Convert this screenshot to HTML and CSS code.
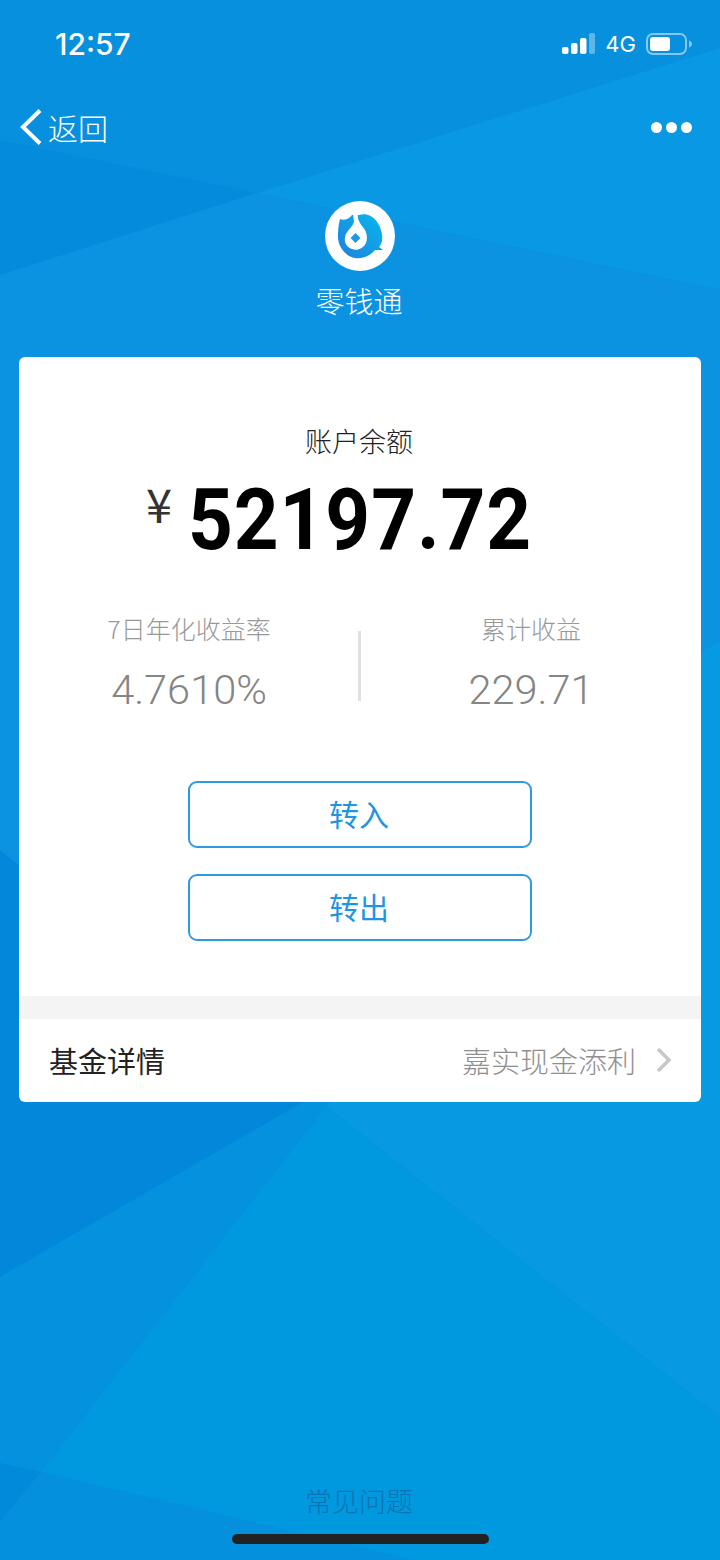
FILE: index.html
```html
<!DOCTYPE html>
<html lang="zh-CN">
<head>
  <meta charset="UTF-8">
  <meta name="viewport" content="width=device-width, initial-scale=1.0">
  <title>零钱通</title>
  <link rel="stylesheet" href="styles.css">
</head>
<body>
  <div class="phone">
    <!-- background facets -->
    <svg class="facets" width="720" height="1560" viewBox="0 0 720 1560">
      <polygon points="0,140 257,193 0,275" fill="#058bdc"/>
      <polygon points="257,193 720,48 720,290" fill="#0998e3"/>
      <polygon points="0,275 257,193 720,290 720,640 320,900 321,1102 0,850" fill="#0b92e0"/>
      <polygon points="720,640 320,900 321,1102 720,1417" fill="#079ae3"/>
      <polygon points="0,850 303,1102 0,1277" fill="#0287da"/>
      <polygon points="321,1102 720,1417 720,1560 413,1560 41,1472" fill="#0098df"/>
      <polygon points="303,1102 330,1102 41,1472 0,1463 0,1277" fill="#0492de"/>
      <polygon points="0,1463 41,1472 0,1522" fill="#028ada"/>
      <polygon points="41,1472 413,1560 0,1560 0,1522" fill="#0590de"/>
    </svg>

    <div class="status-bar">
      <span class="time">12:57</span>
      <div class="status-icons">
        <svg width="33" height="22" viewBox="0 0 33 22">
          <rect x="0" y="14" width="6.500" height="7" rx="2" fill="#fff"/>
          <rect x="9" y="10" width="6.500" height="11" rx="2" fill="#fff"/>
          <rect x="18" y="5" width="6.500" height="16" rx="2" fill="#fff"/>
          <rect x="27" y="0" width="6" height="21" rx="2" fill="#fff" opacity="0.35"/>
        </svg>
        <span class="net">4G</span>
        <svg width="46" height="22" viewBox="0 0 46 22">
          <rect x="1" y="1" width="39" height="20" rx="6" fill="none" stroke="#fff" stroke-opacity="0.5" stroke-width="2"/>
          <rect x="4" y="4" width="20" height="14" rx="3" fill="#fff"/>
          <path d="M43 7.500c2 .6 3 2 3 3.500s-1 2.900-3 3.500z" fill="#fff" opacity="0.5"/>
        </svg>
      </div>
    </div>

    <div class="nav-bar">
      <div class="back">
        <svg width="24" height="38" viewBox="0 0 24 38">
          <path d="M21 2.500 4 19l17 16.500" fill="none" stroke="#fff" stroke-width="4"/>
        </svg>
        <span>返回</span>
      </div>
      <div class="more"><i></i><i></i><i></i></div>
    </div>

    <div class="brand">
      <div class="logo">
        <svg width="70" height="70" viewBox="0 0 70 70">
          <defs>
            <linearGradient id="logo-blue" x1="0.9" y1="0.1" x2="0.1" y2="0.9">
              <stop offset="0" stop-color="#0bb2ea"/>
              <stop offset="1" stop-color="#1a86e0"/>
            </linearGradient>
          </defs>
          <circle cx="35" cy="35" r="35" fill="#fff"/>
          <path d="M15 18C19 20 24 18 27 14L34 14C46 10 56 22 57 34C58 40 56 44 54 46L58 49L50 49C44 56 36 58 30 57C19 55 12 44 13 33C13 27 14 22 15 18Z" fill="url(#logo-blue)"/>
          <path d="M28 13L33 13C32 18 35 22 37 25C42 30 43 37 41 42C38 48 32 50 27 48C22 46 19 42 20 36C21 30 27 27 29 21Z" fill="#fff"/>
          <rect x="27" y="33.500" width="7" height="7" fill="#1f97e2" transform="rotate(45 30.500 37)"/>
        </svg>
      </div>
      <div class="brand-name">零钱通</div>
    </div>

    <div class="card">
      <div class="balance">
        <div class="balance-label">账户余额</div>
        <div class="balance-amount">
          <span class="yen">¥</span>
          <span class="amount">52197.72</span>
        </div>
      </div>

      <div class="stats">
        <div class="stat">
          <div class="stat-label">7日年化收益率</div>
          <div class="stat-value">4.7610%</div>
        </div>
        <div class="stat-line"></div>
        <div class="stat">
          <div class="stat-label">累计收益</div>
          <div class="stat-value">229.71</div>
        </div>
      </div>

      <div class="actions">
        <button>转入</button>
        <button>转出</button>
      </div>

      <div class="band"></div>

      <div class="fund-row">
        <span class="fund-title">基金详情</span>
        <span class="fund-name">嘉实现金添利</span>
        <svg width="16" height="26" viewBox="0 0 16 26">
          <path d="M2 2l11 11L2 24" fill="none" stroke="#c7c7c7" stroke-width="3.500"/>
        </svg>
      </div>
    </div>

    <div class="faq">常见问题</div>
    <div class="home-bar"></div>
  </div>
</body>
</html>
```

FILE: styles.css
```css
* {
  box-sizing: border-box;
}

body {
  margin: 0;
  font-family: "Noto Sans CJK SC", sans-serif;
}

.phone {
  position: relative;
  display: flex;
  flex-direction: column;
  width: 720px;
  height: 1560px;
  overflow: hidden;
  background: #0790dd;
}

.facets {
  position: absolute;
  top: 0;
  left: 0;
}

.status-bar,
.nav-bar,
.brand,
.card,
.faq,
.home-bar {
  position: relative;
}

.status-bar {
  display: flex;
  align-items: center;
  justify-content: space-between;
  height: 88px;
  padding: 0 28px 0 55px;
  color: white;
}

.time {
  font-family: Inter, sans-serif;
  font-size: 30px;
  font-weight: 500;
}

.status-icons {
  display: flex;
  align-items: center;
}

.net {
  margin: 0 10px;
  font-family: Inter, sans-serif;
  font-size: 22px;
}

.nav-bar {
  display: flex;
  align-items: center;
  justify-content: space-between;
  height: 78px;
  padding: 0 28px 0 19px;
  color: white;
}

.back {
  display: flex;
  align-items: center;
  gap: 5px;
  font-size: 30px;
  font-weight: 300;
}

.more {
  display: flex;
  gap: 4px;
}

.more i {
  width: 11px;
  height: 11px;
  border-radius: 50%;
  background: white;
}

.brand {
  display: flex;
  flex-direction: column;
  align-items: center;
  padding-top: 35px;
  color: white;
}

.logo {
  height: 70px;
}

.brand-name {
  margin-top: 8px;
  padding-right: 2px;
  font-size: 29px;
  font-weight: 300;
  line-height: 42px;
}

.card {
  width: 682px;
  height: 745px;
  margin: 36px 0 0 19px;
  border-radius: 6px;
  background: white;
}

.balance {
  padding-top: 64px;
  text-align: center;
}

.balance-label {
  padding-right: 2px;
  font-size: 27px;
  font-weight: 300;
  line-height: 40px;
  color: #222;
}

.balance-amount {
  display: flex;
  justify-content: center;
  align-items: flex-start;
  gap: 16px;
  height: 86px;
  margin-top: 16px;
  padding-right: 42px;
}

.yen {
  margin-top: -4px;
  font-size: 47px;
  line-height: 60px;
  color: #333;
}

.amount {
  margin-right: -30px;
  font-family: Roboto, sans-serif;
  font-size: 85px;
  font-weight: 700;
  line-height: 86px;
  letter-spacing: 1px;
  color: black;
  transform: scaleX(0.92);
  transform-origin: left;
}

.stats {
  display: grid;
  grid-template-columns: 1fr 2px 1fr;
  margin-top: 47px;
}

.stat {
  text-align: center;
}

.stat-label {
  font-size: 25px;
  font-weight: 300;
  line-height: 36px;
  color: #999;
}

.stat-value {
  margin-top: 19px;
  font-family: Roboto, sans-serif;
  font-size: 41.500px;
  font-weight: 300;
  line-height: 50px;
  color: #858585;
}

.stat-line {
  height: 70px;
  margin: 21px 0 0 -1px;
  background: #e0e0e0;
}

.actions {
  display: flex;
  flex-direction: column;
  align-items: center;
  gap: 26px;
  margin-top: 66px;
}

.actions button {
  width: 344px;
  height: 67px;
  padding: 0 2px 3px 0;
  border: 2px solid #2e9be0;
  border-radius: 9px;
  background: white;
  font-family: inherit;
  font-size: 30px;
  font-weight: 400;
  color: #2196e0;
}

.band {
  height: 23px;
  margin-top: 55px;
  background: #f4f4f4;
}

.fund-row {
  display: flex;
  align-items: center;
  height: 83px;
  padding: 0 29px 2px 30px;
  font-size: 29px;
  font-weight: 300;
}

.fund-title {
  margin-right: auto;
  font-weight: 400;
  color: #222;
}

.fund-name {
  margin-right: 20px;
  color: #8f8f8f;
}

.faq {
  margin-top: 379px;
  padding-right: 2px;
  text-align: center;
  font-size: 27px;
  font-weight: 300;
  line-height: 40px;
  color: #0a74b2;
}

.home-bar {
  width: 257px;
  height: 10px;
  margin: 13px auto 0;
  border-radius: 5px;
  background: #222;
}
```
